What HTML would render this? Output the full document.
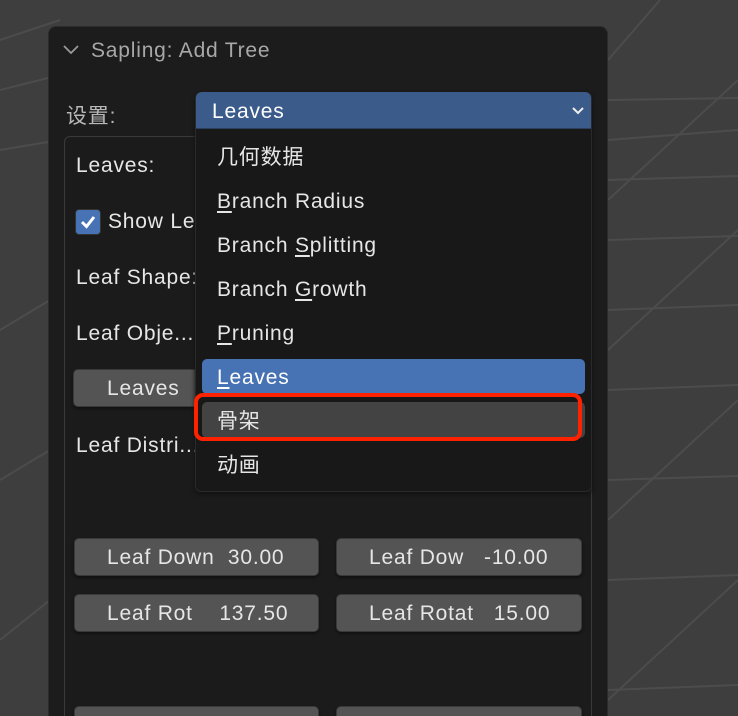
<!DOCTYPE html>
<html><head><meta charset="utf-8"><style>
*{margin:0;padding:0;box-sizing:border-box}
html,body{width:738px;height:716px;overflow:hidden}
body{background:#3e3e3e;position:relative;font-family:"Liberation Sans","Noto Sans CJK SC",sans-serif;font-size:21px;letter-spacing:0.8px;color:#e6e6e6}
.a{position:absolute}
.panel{left:48px;top:26px;width:560px;height:700px;background:#1c1c1c;border:1px solid #2c2c2c;border-radius:8px}
.btn{position:absolute;background:#545454;border:1px solid #3a3a3a;border-radius:5px;height:38px;box-shadow:0 2px 2px #111;color:#e6e6e6;line-height:38px;white-space:pre}
.item{position:absolute;left:217px;line-height:24px}
u{text-decoration:underline;text-underline-offset:3px}
</style></head><body>
<svg class="a" style="left:0;top:0" width="738" height="716">
<g stroke="#4c4c4c" stroke-width="2" fill="none">
<line x1="0" y1="40" x2="60" y2="20"/><line x1="0" y1="90" x2="60" y2="75"/><line x1="0" y1="150" x2="60" y2="140"/><line x1="0" y1="330" x2="50" y2="300"/><line x1="0" y1="480" x2="50" y2="450"/><line x1="0" y1="640" x2="50" y2="600"/>
<line x1="608" y1="100" x2="738" y2="98"/><line x1="608" y1="140" x2="738" y2="130"/><line x1="608" y1="180" x2="738" y2="176"/><line x1="608" y1="240" x2="738" y2="236"/><line x1="608" y1="310" x2="738" y2="305"/><line x1="608" y1="390" x2="738" y2="385"/><line x1="608" y1="480" x2="738" y2="476"/><line x1="608" y1="580" x2="738" y2="575"/><line x1="608" y1="690" x2="738" y2="685"/>
<line x1="608" y1="200" x2="738" y2="80"/><line x1="608" y1="350" x2="738" y2="230"/><line x1="608" y1="520" x2="738" y2="400"/><line x1="608" y1="700" x2="738" y2="580"/><line x1="608" y1="60" x2="660" y2="0"/>
</g></svg>
<div class="a panel"></div>
<svg class="a" style="left:62px;top:43px" width="18" height="14"><path d="M2 3 L9 10 L16 3" stroke="#999" stroke-width="1.8" fill="none"/></svg>
<div class="a" style="left:91px;top:39px;color:#a8a8a8">Sapling: Add Tree</div>
<div class="a" style="left:66px;top:100px;color:#b8b8b8">设置:</div>
<div class="a" style="left:64px;top:136px;width:528px;height:600px;border:1px solid #3a3a3a;border-radius:6px;background:#1b1b1b"></div>
<div class="a" style="left:76px;top:154px">Leaves:</div>
<div class="a" style="left:75px;top:209px;width:26px;height:26px;background:#4772b3;border:1px solid #333;border-radius:4px"></div>
<svg class="a" style="left:78px;top:212px" width="20" height="20"><path d="M4 10 L8.5 14.5 L16 5" stroke="#fff" stroke-width="3" fill="none"/></svg>
<div class="a" style="left:108px;top:210px">Show Le</div>
<div class="a" style="left:76px;top:266px">Leaf Shape:</div>
<div class="a" style="left:76px;top:322px">Leaf Obje...</div>
<div class="btn" style="left:73px;top:369px;width:140px;padding-left:33px">Leaves</div>
<div class="a" style="left:76px;top:434px">Leaf Distri...</div>
<div class="btn" style="left:74px;top:538px;width:245px;padding-left:32px">Leaf Down  30.00</div>
<div class="btn" style="left:336px;top:538px;width:246px;padding-left:32px">Leaf Dow   -10.00</div>
<div class="btn" style="left:74px;top:594px;width:245px;padding-left:32px">Leaf Rot    137.50</div>
<div class="btn" style="left:336px;top:594px;width:246px;padding-left:32px">Leaf Rotat   15.00</div>
<div class="btn" style="left:74px;top:706px;width:245px"></div>
<div class="btn" style="left:336px;top:706px;width:246px"></div>
<div class="a" style="left:195px;top:92px;width:397px;height:400px;background:#181818;border:1px solid #2a2a2a;border-radius:6px;box-shadow:0 2px 4px #111"></div>
<div class="a" style="left:196px;top:92px;width:395px;height:37px;background:#3b5b8a;border-radius:6px 6px 0 0;border-bottom:1px solid #2b3f5e"></div>
<div class="a" style="left:212px;top:100px;color:#fff">Leaves</div>
<svg class="a" style="left:571px;top:106px" width="14" height="10"><path d="M2 2 L7 7 L12 2" stroke="#eee" stroke-width="2" fill="none"/></svg>
<div class="item" style="top:146px">几何数据</div>
<div class="item" style="top:190px"><u>B</u>ranch Radius</div>
<div class="item" style="top:234px">Branch <u>S</u>plitting</div>
<div class="item" style="top:278px">Branch <u>G</u>rowth</div>
<div class="item" style="top:322px"><u>P</u>runing</div>
<div class="a" style="left:202px;top:359px;width:383px;height:35px;background:#4772b3;border-radius:5px"></div>
<div class="item" style="top:366px;color:#fff"><u>L</u>eaves</div>
<div class="a" style="left:202px;top:402px;width:383px;height:36px;background:#434343;border-radius:5px"></div>
<div class="item" style="top:410px">骨架</div>
<div class="a" style="left:194px;top:393px;width:388px;height:48px;border:4px solid #ff2200;border-radius:9px"></div>
<div class="item" style="top:454px">动画</div>
</body></html>
